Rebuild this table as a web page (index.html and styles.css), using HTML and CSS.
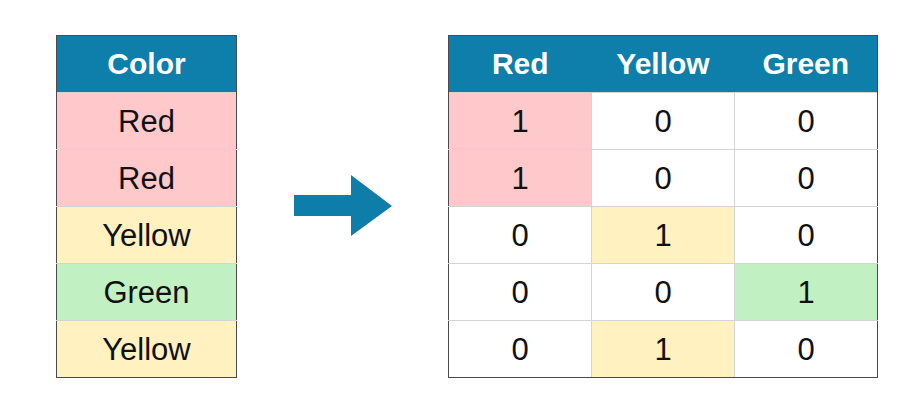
FILE: index.html
```html
<!DOCTYPE html>
<html>
<head>
<meta charset="utf-8">
<link rel="stylesheet" href="styles.css">
</head>
<body>
<div class="page">
  <table class="grid left">
    <thead><tr><th>Color</th></tr></thead>
    <tbody>
      <tr><td class="red">Red</td></tr>
      <tr><td class="red">Red</td></tr>
      <tr><td class="yellow">Yellow</td></tr>
      <tr><td class="green">Green</td></tr>
      <tr><td class="yellow">Yellow</td></tr>
    </tbody>
  </table>
  <div class="arrow-wrap">
    <svg class="arrow" width="98" height="62" viewBox="0 0 98 62">
      <polygon points="0,20 57,20 57,0 98,31 57,61 57,41 0,41" fill="#0f7daa"/>
    </svg>
  </div>
  <table class="grid right">
    <thead><tr><th>Red</th><th>Yellow</th><th>Green</th></tr></thead>
    <tbody>
      <tr><td class="red">1</td><td>0</td><td>0</td></tr>
      <tr><td class="red">1</td><td>0</td><td>0</td></tr>
      <tr><td>0</td><td class="yellow">1</td><td>0</td></tr>
      <tr><td>0</td><td>0</td><td class="green">1</td></tr>
      <tr><td>0</td><td class="yellow">1</td><td>0</td></tr>
    </tbody>
  </table>
</div>
</body>
</html>
```
FILE: styles.css
```css
html, body {
  margin: 0;
  padding: 0;
  background: #ffffff;
}
.page {
  display: flex;
  align-items: flex-start;
  padding: 35px 0 0 56px;
  font-family: "Liberation Sans", Arial, sans-serif;
}
.grid {
  border-collapse: collapse;
  border: 1px solid #4a4a4a;
  table-layout: fixed;
}
.grid th {
  background: #0e7eab;
  color: #ffffff;
  font-weight: bold;
  font-size: 30px;
  line-height: 1;
  height: 56px;
  padding: 0;
  text-align: center;
  border: none;
}
.grid td {
  font-size: 31px;
  line-height: 1;
  color: #111111;
  height: 56px;
  padding: 0;
  text-align: center;
  border: 1px solid #d4d4d4;
  background: #ffffff;
}
.grid tbody tr:last-child td {
  border-bottom: 1px solid #4a4a4a;
}
.grid td:first-child { border-left: 1px solid #4a4a4a; }
.grid td:last-child { border-right: 1px solid #4a4a4a; }
.left th, .left td { width: 179px; }
.right th, .right td { width: 142px; }
.red { background: #ffc9cb !important; }
.yellow { background: #fff2c0 !important; }
.green { background: #c1f0c3 !important; }
.arrow-wrap {
  width: 211px;
  display: flex;
  justify-content: flex-start;
  padding-top: 140px;
  padding-left: 57px;
  box-sizing: border-box;
}
.arrow { display: block; }
```
